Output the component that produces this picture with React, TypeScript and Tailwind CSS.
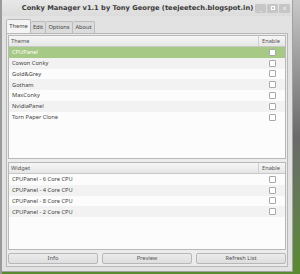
import React from "react";

const themes = ["CPUPanel", "Cowon Conky", "Gold&Grey", "Gotham", "MaxConky", "NvidiaPanel", "Torn Paper Clone"];
const widgets = ["CPUPanel - 6 Core CPU", "CPUPanel - 4 Core CPU", "CPUPanel - 8 Core CPU", "CPUPanel - 2 Core CPU"];

function Check() {
  return <div className="w-[7px] h-[7px] border border-[#a8a8a8] bg-white rounded-[1px]" />;
}

function List({ title, items, selected, height }: { title: string; items: string[]; selected?: number; height: string }) {
  return (
    <div className={`flex flex-col border border-[#b8b8b8] bg-[#fcfcfc] ${height}`}>
      <div className="flex h-[11px] bg-gradient-to-b from-[#f6f6f6] to-[#e6e6e6] border-b border-[#c8c8c8] text-[5.7px] text-[#555] leading-[10px]">
        <div className="flex-1 pl-[2px]">{title}</div>
        <div className="w-[27px] border-l border-[#d0d0d0] pl-[3px]">Enable</div>
      </div>
      {items.map((t, i) => (
        <div
          key={t}
          className={`flex items-center h-[10.8px] text-[5.7px] ${
            selected === i ? "bg-[#a6c985] text-white" : i % 2 === 1 ? "bg-[#f2f2f2] text-[#444]" : "bg-[#fcfcfc] text-[#444]"
          }`}
        >
          <div className="flex-1 pl-[3px]">{t}</div>
          <div className="w-[27px] flex justify-center pl-[2px]">
            <Check />
          </div>
        </div>
      ))}
    </div>
  );
}

export default function App() {
  return (
    <div className="flex w-[300px] h-[274px] bg-gradient-to-b from-[#c8c8c8] via-[#6a6a6a] to-[#5a8a30]" style={{ fontFamily: '"Noto Sans", sans-serif' }}>
      <div className="w-[2px] bg-[#9a9a9a]" />
      <div className="flex flex-col w-[291px] h-[272px] bg-[#e2e2e2] border-r border-b border-[#a0a0a0]">
        <div className="flex items-center h-[16px] bg-gradient-to-b from-[#e8e8e8] to-[#dcdcdc]">
          <div className="flex-1 flex justify-center pl-[18px]">
            <span className="text-[6.7px] font-bold text-[#3c3c3c] whitespace-nowrap" style={{ fontFamily: '"DejaVu Sans", sans-serif' }}>
              Conky Manager v1.1 by Tony George (teejeetech.blogspot.in)
            </span>
          </div>
          <div className="flex gap-[1px] pr-[2px] text-[6px] text-white">
            <div className="w-[11px] h-[9px] bg-[#c6c6c6] rounded-[1px] flex items-end justify-center leading-none pb-[1px]">_</div>
            <div className="w-[11px] h-[9px] bg-[#c6c6c6] rounded-[1px] flex items-center justify-center">
              <div className="w-[4px] h-[4px] border border-white" />
            </div>
            <div className="w-[11px] h-[9px] bg-[#c6c6c6] rounded-[1px] flex items-center justify-center leading-none">x</div>
          </div>
        </div>
        <div className="flex items-end h-[17px] pl-[4px] text-[5.7px] text-[#444]">
          <div className="h-[14px] w-[25px] flex items-center justify-center bg-[#f4f4f4] border border-b-0 border-[#b8b8b8] rounded-t-[2px]">Theme</div>
          <div className="h-[12px] w-[15px] flex items-center justify-center bg-[#dcdcdc] border border-b-0 border-l-0 border-[#bcbcbc] rounded-t-[2px]">Edit</div>
          <div className="h-[12px] w-[27px] flex items-center justify-center bg-[#dcdcdc] border border-b-0 border-l-0 border-[#bcbcbc] rounded-t-[2px]">Options</div>
          <div className="h-[12px] w-[22px] flex items-center justify-center bg-[#dcdcdc] border border-b-0 border-l-0 border-[#bcbcbc] rounded-t-[2px]">About</div>
        </div>
        <div className="flex flex-col mx-[4px] border border-[#b8b8b8] bg-[#ececec] px-[1px] pt-[1px] gap-[3px] h-[234px]">
          <List title="Theme" items={themes} selected={0} height="h-[124px]" />
          <List title="Widget" items={widgets} height="h-[88px]" />
          <div className="flex gap-[4px] h-[11px]">
            {["Info", "Preview", "Refresh List"].map((b) => (
              <div key={b} className="flex-1 flex items-center justify-center bg-gradient-to-b from-[#ececec] to-[#dedede] border border-[#b8b8b8] rounded-[2px] text-[5.7px] text-[#555]">
                {b}
              </div>
            ))}
          </div>
        </div>
      </div>
      <div className="flex-1" />
    </div>
  );
}
